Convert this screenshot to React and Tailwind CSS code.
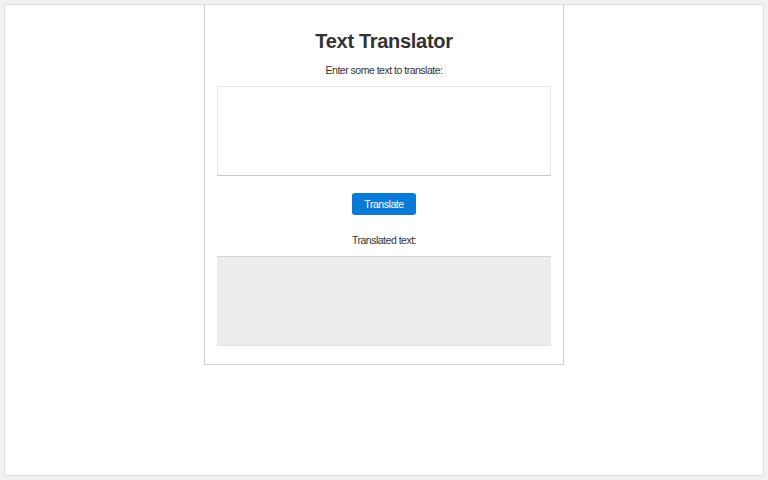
import React, { useState } from 'react';

const App = () => {
    const [text, setText] = useState('');

    return (
        <div className="w-[768px] h-[480px] bg-[#f2f2f2] p-1 font-['Liberation_Sans',Arial,sans-serif] text-[#333]">
            <div className="h-full bg-white border border-[#dcdcdc] flex justify-center">
                <div className="w-[360px] h-[360px] border-x border-b border-[#cfcfcf] px-3 flex flex-col items-center">
                    <h1 className="mt-[24px] text-[20px] leading-6 font-bold tracking-[-0.3px]">Text Translator</h1>
                    <p className="mt-[10px] text-[10.5px] leading-[14px] tracking-[-0.5px]">Enter some text to translate:</p>
                    <textarea
                        value={text}
                        onChange={(e) => setText(e.target.value)}
                        className="mt-[9px] w-full h-[90px] resize-none border border-[#e6e6e6] border-b-[#c8c8c8] outline-none p-2 text-[11px]"
                    />
                    <button className="mt-[17px] w-16 h-[22px] rounded-[3px] bg-[#0a7ad6] text-white text-[10.5px] leading-none tracking-[-0.45px]">
                        Translate
                    </button>
                    <p className="mt-[18px] text-[10.5px] leading-[14px] tracking-[-0.5px]">Translated text:</p>
                    {/* output */}
                    <div className="mt-[9px] w-full h-[90px] bg-[#ededed] border-t border-[#d4d4d4] border-b border-b-[#e0e0e0]" />
                </div>
            </div>
        </div>
    );
};

export default App;
